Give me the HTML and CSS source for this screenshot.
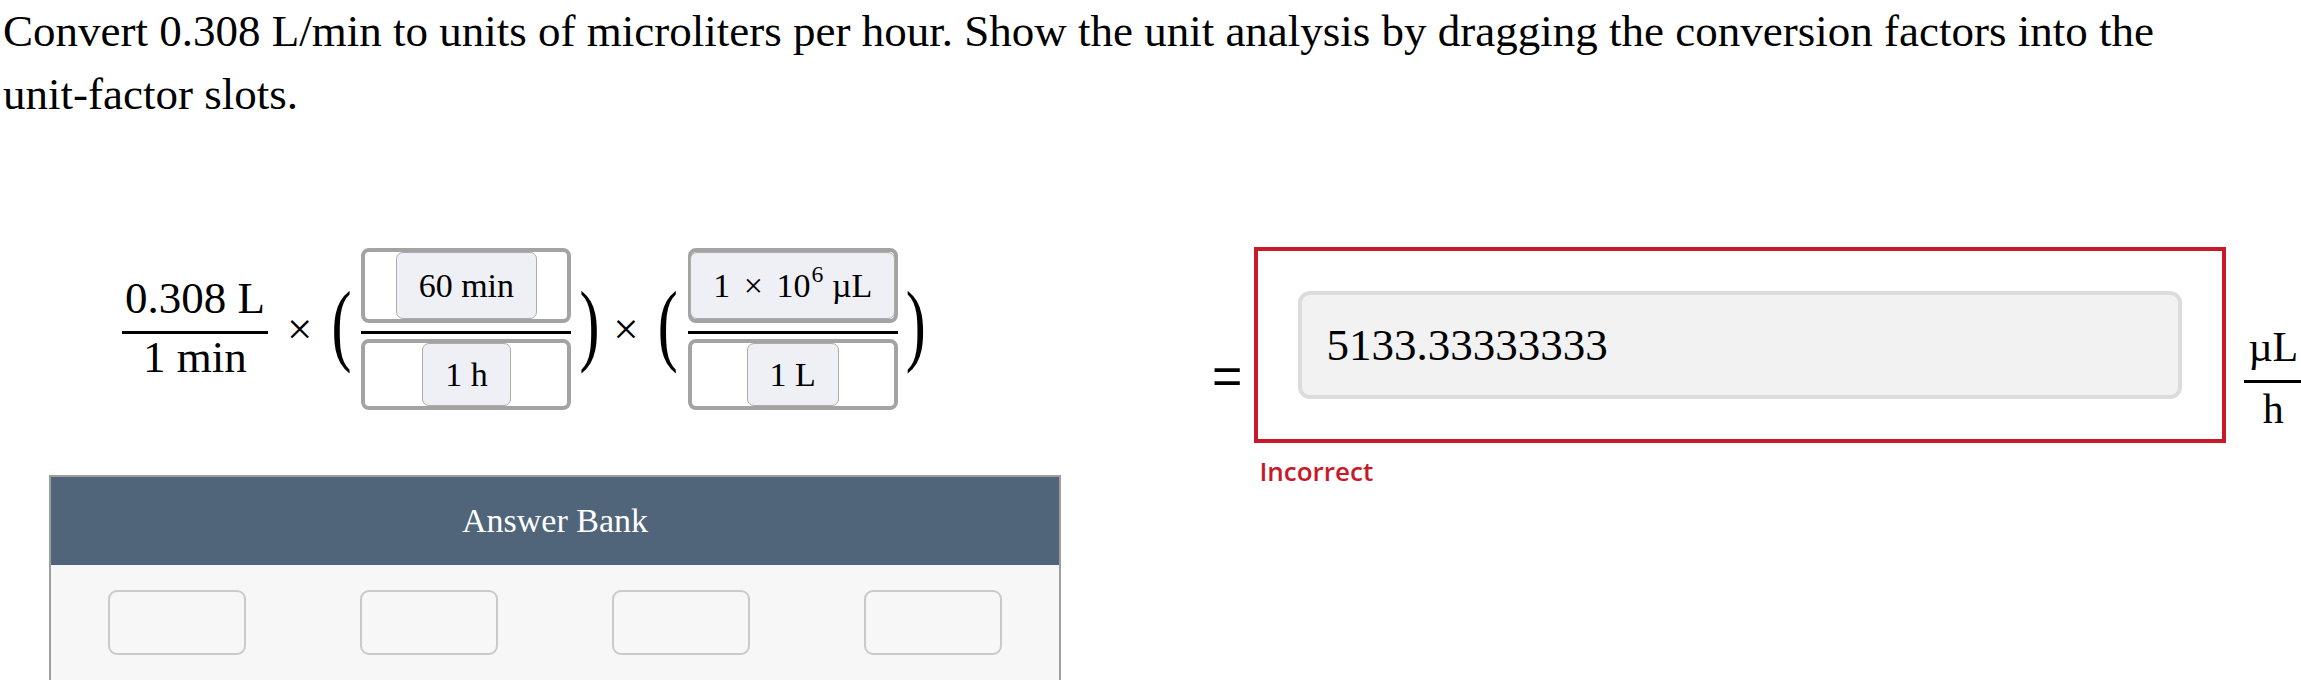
FILE: index.html
```html
<!DOCTYPE html>
<html lang="en">
<head>
    <meta charset="UTF-8">
    <meta name="viewport" content="width=device-width, initial-scale=1.0">
    <title>Unit Analysis</title>
    <link rel="stylesheet" href="styles.css">
</head>
<body>
    <p class="prompt">Convert 0.308 L/min to units of microliters per hour. Show the unit analysis by dragging the conversion factors into the <span class="nowrap">unit-factor</span> slots.</p>

    <div class="workspace">
        <div class="left-col">
            <div class="expression">
                <div class="frac given">
                    <span class="num">0.308 L</span>
                    <span class="den">1 min</span>
                </div>
                <span class="times">×</span>
                <span class="paren">(</span>
                <div class="factor">
                    <div class="slot slot-num"><div class="chip"><span>60 min</span></div></div>
                    <div class="factor-bar"></div>
                    <div class="slot slot-den"><div class="chip"><span>1 h</span></div></div>
                </div>
                <span class="paren close">)</span>
                <span class="times">×</span>
                <span class="paren">(</span>
                <div class="factor">
                    <div class="slot slot-num"><div class="chip"><span>1<span class="chip-times">×</span>10<sup>6</sup>&nbsp;µL</span></div></div>
                    <div class="factor-bar"></div>
                    <div class="slot slot-den"><div class="chip"><span>1 L</span></div></div>
                </div>
                <span class="paren close">)</span>
            </div>

            <div class="answer-bank">
                <div class="bank-header">Answer Bank</div>
                <div class="bank-body">
                    <div class="bank-slot"></div>
                    <div class="bank-slot"></div>
                    <div class="bank-slot"></div>
                    <div class="bank-slot"></div>
                </div>
            </div>
        </div>

        <span class="equals">=</span>

        <div class="answer">
            <div class="answer-box">
                <div class="answer-input">5133.33333333</div>
            </div>
            <div class="feedback">Incorrect</div>
        </div>

        <div class="frac unit">
            <span class="num">µL</span>
            <span class="den">h</span>
        </div>
    </div>
</body>
</html>
```

FILE: styles.css
```css
* {
    margin: 0;
    padding: 0;
    box-sizing: border-box;
}

body {
    font-family: "Liberation Serif", "Times New Roman", serif;
    color: #000;
    background: #fff;
    padding-left: 3px;
    overflow: hidden;
}

.prompt {
    font-size: 45px;
    line-height: 63px;
}

.nowrap {
    white-space: nowrap;
}

.workspace {
    display: flex;
    align-items: flex-start;
    margin-top: 121px;
}

.workspace > * {
    flex-shrink: 0;
}

.left-col {
    width: 1012px;
    margin-left: 46px;
}

/* equation row */
.expression {
    display: flex;
    align-items: flex-start;
    padding-left: 73px;
}

.frac {
    display: flex;
    flex-direction: column;
    text-align: center;
}

.frac .num {
    border-bottom: 3px solid #000;
}

.given {
    margin-top: 29px;
    font-size: 45px;
}

.given .num {
    line-height: 45px;
    padding: 0 3px 10px;
}

.given .den {
    line-height: 45px;
    padding-top: 1px;
}

.times {
    font-size: 45px;
    line-height: 45px;
    margin-top: 60px;
    margin-left: 19px;
}

.paren {
    display: inline-block;
    font-size: 60px;
    line-height: 60px;
    margin-top: 47px;
    margin-left: 19px;
    transform: scaleY(1.5);
}

.paren.close {
    margin-left: 8px;
}

.paren.close + .times {
    margin-left: 14px;
}

.factor {
    display: flex;
    flex-direction: column;
    width: 210px;
    margin-top: 1px;
    margin-left: 10px;
}

.factor-bar {
    height: 3px;
    background: #000;
    margin: 8px 0 5px;
}

.slot {
    display: flex;
    justify-content: center;
    border: 4px solid #a3a3a3;
    border-radius: 8px;
}

.slot-num {
    height: 75px;
}

.slot-den {
    height: 71px;
}

.chip {
    display: flex;
    align-items: center;
    height: 100%;
    padding: 0 22px;
    font-size: 34px;
    white-space: nowrap;
    background: #eff0f5;
    border: 1px solid #acacac;
    border-radius: 7px;
}

.chip-times {
    margin: 0 0.4em;
}

.chip sup {
    font-size: 0.7em;
    line-height: 0;
    vertical-align: 0.6em;
    margin-left: 1px;
}

/* answer bank */
.answer-bank {
    margin-top: 65px;
    border: 2px solid #9e9e9e;
    border-bottom: none;
}

.bank-header {
    height: 88px;
    line-height: 88px;
    text-align: center;
    font-size: 34px;
    color: #fff;
    background: #50647a;
}

.bank-body {
    display: grid;
    grid-template-columns: repeat(4, 1fr);
    justify-items: center;
    padding: 25px 0;
    background: #f7f7f7;
}

.bank-slot {
    width: 138px;
    height: 65px;
    border: 2px solid #cacaca;
    border-radius: 9px;
}

/* answer side */
.equals {
    font-family: "Liberation Sans", Arial, sans-serif;
    font-size: 52px;
    line-height: 52px;
    margin-top: 103px;
    margin-left: 151px;
}

.answer {
    margin-left: 12px;
}

.answer-box {
    width: 972px;
    padding: 40px;
    border: 4px solid #c8192b;
}

.answer-input {
    display: flex;
    align-items: center;
    height: 108px;
    padding-left: 24px;
    font-size: 45px;
    background: #f2f2f2;
    border: 4px solid #dcdcdc;
    border-radius: 12px;
}

.feedback {
    margin-top: 13px;
    padding-left: 5px;
    font-family: "Open Sans", sans-serif;
    font-weight: 600;
    font-size: 26px;
    line-height: 30px;
    color: #c8192b;
}

.unit {
    margin-top: 79px;
    margin-left: 18px;
    font-size: 42px;
}

.unit .num {
    line-height: 42px;
    padding: 0 4px 12px;
}

.unit .den {
    line-height: 42px;
    padding-top: 5px;
}
```
